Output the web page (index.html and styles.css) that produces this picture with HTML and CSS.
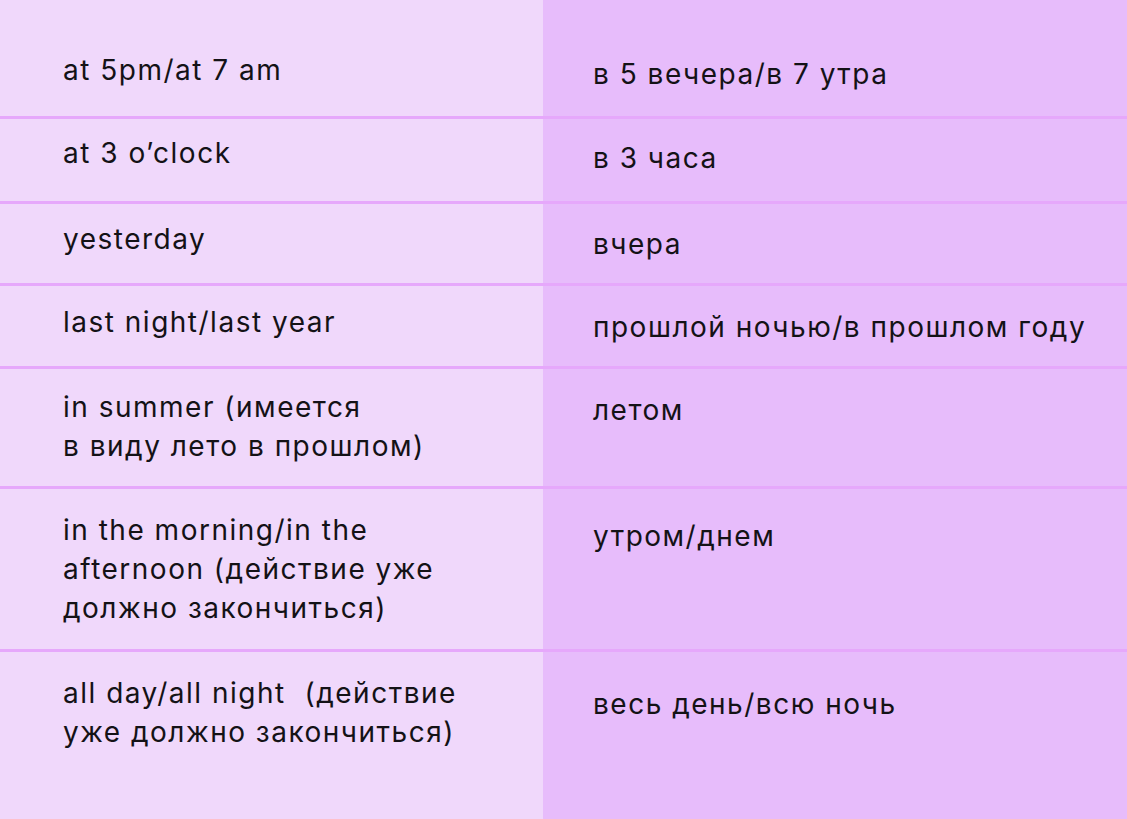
FILE: index.html
```html
<!DOCTYPE html>
<html lang="ru">
<head>
<meta charset="utf-8">
<link rel="stylesheet" href="styles.css">
</head>
<body>
<div class="table">
  <div class="row r1">
    <div class="cell left">at 5pm/at 7 am</div>
    <div class="cell right">в 5 вечера/в 7 утра</div>
  </div>
  <div class="row r2">
    <div class="cell left">at 3 o’clock</div>
    <div class="cell right">в 3 часа</div>
  </div>
  <div class="row r3">
    <div class="cell left">yesterday</div>
    <div class="cell right">вчера</div>
  </div>
  <div class="row r4">
    <div class="cell left">last night/last year</div>
    <div class="cell right">прошлой ночью/в прошлом году</div>
  </div>
  <div class="row r5">
    <div class="cell left">in summer (имеется<br>в виду лето в прошлом)</div>
    <div class="cell right">летом</div>
  </div>
  <div class="row r6">
    <div class="cell left">in the morning/in the<br>afternoon (действие уже<br>должно закончиться)</div>
    <div class="cell right">утром/днем</div>
  </div>
  <div class="row r7">
    <div class="cell left">all day/all night&nbsp; (действие<br>уже должно закончиться)</div>
    <div class="cell right">весь день/всю ночь</div>
  </div>
</div>
</body>
</html>
```
FILE: styles.css
```css
html, body {
  margin: 0;
  padding: 0;
}
body {
  width: 1127px;
  height: 819px;
  overflow: hidden;
  background: #f0d8fb;
  font-family: "Inter", "Liberation Sans", sans-serif;
  color: #141216;
}
.table {
  display: flex;
  flex-direction: column;
  height: 819px;
}
.row {
  display: grid;
  grid-template-columns: 543px 1fr;
  border-bottom: 3px solid #e6a8fb;
  box-sizing: border-box;
}
.row:last-child {
  border-bottom: none;
  flex: 1;
}
.cell {
  font-size: 28px;
  letter-spacing: 1.5px;
  line-height: 39px;
  white-space: nowrap;
}
.left {
  background: #f0d8fb;
  padding-left: 63px;
}
.right {
  background: #e7bcfb;
  padding-left: 50px;
}
.r1 { height: 119px; }
.r2 { height: 85px; }
.r3 { height: 82px; }
.r4 { height: 83px; }
.r5 { height: 120px; }
.r6 { height: 163px; }

.r1 .left { padding-top: 51px; }
.r1 .right { padding-top: 55px; }
.r2 .left { padding-top: 15px; }
.r2 .right { padding-top: 20px; }
.r3 .left { padding-top: 16px; }
.r3 .right { padding-top: 21px; }
.r4 .left { padding-top: 17px; }
.r4 .right { padding-top: 22px; }
.r5 .left { padding-top: 19px; }
.r5 .right { padding-top: 22px; }
.r6 .left { padding-top: 22px; }
.r6 .right { padding-top: 28px; }
.r7 .left { padding-top: 22px; }
.r7 .right { padding-top: 33px; }
```
